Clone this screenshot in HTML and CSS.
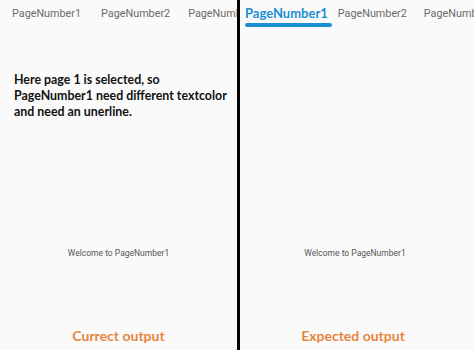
FILE: index.html
```html
<!DOCTYPE html>
<html>
<head>
<meta charset="utf-8">
<link rel="stylesheet" href="styles.css">
</head>
<body>
<div class="compare">
  <section class="panel panel-left">
    <nav class="tabs tabs-left">
      <span class="tab">PageNumber1</span>
      <span class="tab">PageNumber2</span>
      <span class="tab">PageNumber3</span>
    </nav>
    <p class="note">Here page 1 is selected, so<br>PageNumber1 need different textcolor<br>and need an unerline.</p>
    <p class="welcome welcome-left">Welcome to PageNumber1</p>
    <p class="caption">Currect output</p>
  </section>
  <div class="divider"></div>
  <section class="panel panel-right">
    <nav class="tabs tabs-right">
      <span class="tab tab-active">PageNumber1</span>
      <span class="tab">PageNumber2</span>
      <span class="tab">PageNumber3</span>
    </nav>
    <div class="spacer"></div>
    <p class="welcome welcome-right">Welcome to PageNumber1</p>
    <p class="caption">Expected output</p>
  </section>
</div>
</body>
</html>
```

FILE: styles.css
```css
html, body {
  margin: 0;
  padding: 0;
  background: #fafafa;
}
.compare {
  display: flex;
  width: 474px;
  height: 350px;
  overflow: hidden;
}
.panel {
  display: flex;
  flex-direction: column;
  overflow: hidden;
  background: #fafafa;
}
.panel-left { width: 237px; }
.panel-right { width: 234px; }
.divider {
  width: 3px;
  background: #000;
  flex: none;
}
.tabs {
  display: flex;
  white-space: nowrap;
  height: 28px;
  flex: none;
}
.tab {
  font-family: Roboto, sans-serif;
  font-size: 10.8px;
  color: #6b6b6b;
  line-height: 14px;
  padding-top: 7px;
  flex: none;
}
.tabs-left { padding-left: 12px; gap: 20px; }
.tabs-left .tab:nth-child(3) { margin-left: -2px; }
.tabs-right { padding-left: 5px; gap: 10px; }
.tabs-right .tab:nth-child(3) { margin-left: 7px; }
.tab-active {
  font-family: Lato, sans-serif;
  font-weight: 700;
  font-size: 13px;
  color: #1b8fd2;
  line-height: 14px;
  padding-top: 6px;
  position: relative;
  padding-right: 4px;
  margin-right: -4px;
}
.tab-active::after {
  content: "";
  position: absolute;
  left: 0;
  right: 0;
  top: 23px;
  height: 4px;
  border-radius: 2px;
  background: #1b8fd2;
}
.note {
  margin: 44px 0 0 14px;
  font-family: Lato, sans-serif;
  font-weight: 700;
  font-size: 12.4px;
  line-height: 16px;
  color: #111;
}
.spacer { height: 92px; flex: none; }
.welcome {
  margin: 0;
  text-align: center;
  font-family: Roboto, sans-serif;
  font-size: 8.5px;
  line-height: 12px;
  color: #555;
}
.welcome-left { margin-top: 127px; }
.welcome-right { margin-top: 127px; padding-right: 4px; }
.caption {
  margin: 68px 0 0;
  text-align: center;
  font-family: Lato, sans-serif;
  font-weight: 700;
  font-size: 14px;
  line-height: 18px;
  color: #e8853d;
}
.panel-right .caption { padding-right: 8px; }
```
